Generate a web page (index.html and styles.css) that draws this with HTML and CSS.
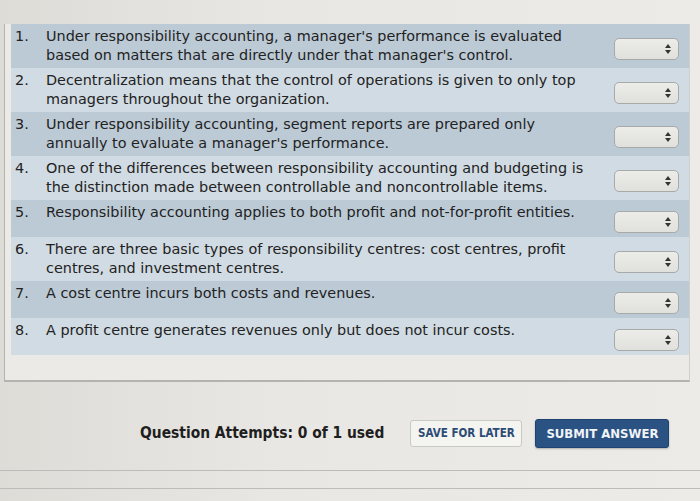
FILE: index.html
```html
<!DOCTYPE html>
<html>
<head>
<meta charset="utf-8">
<link rel="stylesheet" href="styles.css">
</head>
<body>
<div class="page">
  <div class="top"></div>
  <div class="panel">
    <div class="list">
      <div class="row dark"><span class="num">1.</span><span class="txt">Under responsibility accounting, a manager's performance is evaluated based on matters that are directly under that manager's control.</span><span class="sel"><i class="arr"></i></span></div>
      <div class="row light"><span class="num">2.</span><span class="txt">Decentralization means that the control of operations is given to only top managers throughout the organization.</span><span class="sel"><i class="arr"></i></span></div>
      <div class="row dark"><span class="num">3.</span><span class="txt">Under responsibility accounting, segment reports are prepared only annually to evaluate a manager's performance.</span><span class="sel"><i class="arr"></i></span></div>
      <div class="row light"><span class="num">4.</span><span class="txt">One of the differences between responsibility accounting and budgeting is the distinction made between controllable and noncontrollable items.</span><span class="sel"><i class="arr"></i></span></div>
      <div class="row dark"><span class="num">5.</span><span class="txt">Responsibility accounting applies to both profit and not-for-profit entities.</span><span class="sel"><i class="arr"></i></span></div>
      <div class="row light"><span class="num">6.</span><span class="txt">There are three basic types of responsibility centres: cost centres, profit centres, and investment centres.</span><span class="sel"><i class="arr"></i></span></div>
      <div class="row dark"><span class="num">7.</span><span class="txt">A cost centre incurs both costs and revenues.</span><span class="sel"><i class="arr"></i></span></div>
      <div class="row light"><span class="num">8.</span><span class="txt">A profit centre generates revenues only but does not incur costs.</span><span class="sel"><i class="arr"></i></span></div>
    </div>
  </div>
  <div class="actions">
    <span class="attempts">Question Attempts: 0 of 1 used</span>
    <button class="btn save">SAVE FOR LATER</button>
    <button class="btn submit">SUBMIT ANSWER</button>
  </div>
  <div class="rule r1"></div>
  <div class="rule r2"></div>
</div>
</body>
</html>
```
FILE: styles.css
```css
html, body {
  margin: 0;
  padding: 0;
}
body {
  width: 700px;
  height: 501px;
  overflow: hidden;
  background: linear-gradient(90deg, #dedcd7 0%, #e8e7e3 40%, #ecebe7 100%);
  font-family: "DejaVu Sans", Verdana, sans-serif;
  color: #222;
}
.page {
  width: 700px;
}
.top {
  height: 24px;
}
.panel {
  margin-left: 4px;
  width: 686px;
  height: 358px;
  border-left: 1px solid #b3b3b1;
  border-bottom: 2px solid #b3b3b1;
  border-right: 1px solid #d0cfcb;
  background: #ebeae6;
  box-sizing: border-box;
  padding-left: 6px;
}
.list {
  width: 678px;
}
.row {
  display: flex;
  align-items: flex-start;
  padding: 3px 0 3px 4px;
  box-sizing: border-box;
  min-height: 37px;
}
.row.dark { background: #bccad6; }
.row.light { background: #d1dbe3; }
.row .num {
  width: 31px;
  flex: none;
  font-size: 14.4px;
  line-height: 19px;
}
.row .txt {
  width: 548px;
  flex: none;
  font-size: 14.4px;
  line-height: 19px;
}
.sel {
  flex: none;
  align-self: center;
  margin-left: 20px;
  margin-top: 6px;
  width: 65px;
  height: 22px;
  box-sizing: border-box;
  border: 1px solid #a8aaa9;
  border-radius: 5px;
  background: linear-gradient(#ecece8, #e0e0dc);
  position: relative;
}
.arr {
  position: absolute;
  right: 7px;
  top: 5px;
  width: 0;
  height: 0;
  border-left: 3px solid transparent;
  border-right: 3px solid transparent;
  border-bottom: 4px solid #333;
}
.arr::after {
  content: "";
  position: absolute;
  left: -3px;
  top: 6px;
  border-left: 3px solid transparent;
  border-right: 3px solid transparent;
  border-top: 4px solid #333;
}
.actions {
  display: flex;
  align-items: center;
  padding-left: 140px;
  margin-top: 36px;
  height: 30px;
}
.attempts {
  font-family: "DejaVu Sans Condensed", "DejaVu Sans", sans-serif;
  font-weight: bold;
  font-size: 15.4px;
  color: #1e1e1e;
  margin-right: 26px;
}
.btn {
  font-family: "DejaVu Sans Condensed", "DejaVu Sans", sans-serif;
  font-weight: bold;
  border-radius: 3px;
  cursor: pointer;
}
.save {
  height: 27px;
  width: 112px;
  background: #f4f4f1;
  border: 1px solid #c8c8c6;
  color: #2c4c76;
  font-size: 11.5px;
  padding: 0;
  margin-right: 13px;
}
.submit {
  height: 29px;
  width: 134px;
  background: #2a5384;
  border: 1px solid #1f4270;
  color: #f2f4f6;
  font-size: 13px;
  padding: 0;
  box-shadow: 0 1px 2px rgba(0,0,0,0.25);
}
.rule {
  height: 0;
  border-top: 1px solid #bdbcb8;
}
.r1 { margin-top: 22px; }
.r2 { margin-top: 17px; }
```
